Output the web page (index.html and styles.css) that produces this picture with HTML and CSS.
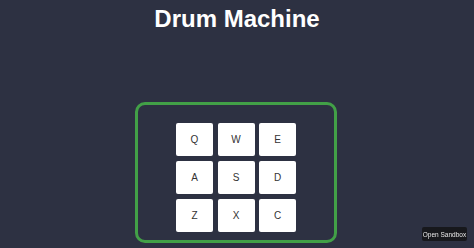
FILE: index.html
```html
<!DOCTYPE html>
<html lang="en">
<head>
<meta charset="utf-8">
<title>Drum Machine</title>
<link rel="stylesheet" href="styles.css">
</head>
<body>
<div class="app">
  <h1 class="title">Drum Machine</h1>
  <div class="machine">
    <div class="pads">
      <button class="pad">Q</button>
      <button class="pad">W</button>
      <button class="pad">E</button>
      <button class="pad">A</button>
      <button class="pad">S</button>
      <button class="pad">D</button>
      <button class="pad">Z</button>
      <button class="pad">X</button>
      <button class="pad">C</button>
    </div>
  </div>
</div>
<a class="sandbox-btn">Open Sandbox</a>
</body>
</html>
```
FILE: styles.css
```css
html, body {
  margin: 0;
  padding: 0;
  height: 100%;
  background: #2d3142;
  font-family: "Liberation Sans", Arial, sans-serif;
  overflow: hidden;
}

.app {
  display: flex;
  flex-direction: column;
  align-items: center;
}

.title {
  margin: 5px 0 0;
  font-size: 24px;
  line-height: 28px;
  font-weight: bold;
  color: #ffffff;
}

.machine {
  margin-top: 69px;
  width: 196px;
  height: 135px;
  box-sizing: content-box;
  border: 3px solid #42a047;
  border-radius: 10px;
  display: flex;
  justify-content: center;
  align-items: flex-start;
  padding-top: 0;
  position: relative;
  left: -1px;
}

.pads {
  margin-top: 18px;
  display: grid;
  grid-template-columns: repeat(3, 37px);
  grid-auto-rows: 32.5px;
  column-gap: 4.5px;
  row-gap: 5.5px;
}

.pad {
  margin: 0;
  padding: 0;
  border: none;
  border-radius: 2px;
  background: #ffffff;
  color: #333333;
  font-family: "Liberation Sans", Arial, sans-serif;
  font-size: 10px;
  display: flex;
  align-items: center;
  justify-content: center;
}

.sandbox-btn {
  position: fixed;
  right: 7px;
  bottom: 7px;
  width: 45px;
  height: 14px;
  background: #17181c;
  color: #e8e8e8;
  font-size: 6.5px;
  border-radius: 2px;
  display: flex;
  align-items: center;
  justify-content: center;
}
```
